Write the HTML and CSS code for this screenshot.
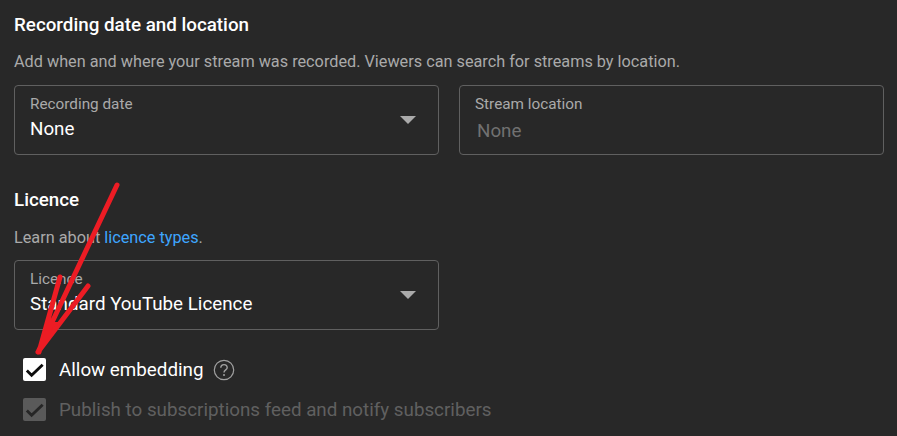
FILE: index.html
```html
<!DOCTYPE html>
<html lang="en">

<head>
    <meta charset="UTF-8">
    <title>Recording date and licence</title>
    <link rel="stylesheet" href="styles.css">
</head>

<body>
    <div class="page">
        <h2 class="section-title">Recording date and location</h2>
        <p class="section-desc">Add when and where your stream was recorded. Viewers can search for streams by location.</p>
        <div class="field-row">
            <div class="field">
                <div class="field-label">Recording date</div>
                <div class="field-value">None</div>
                <span class="caret"></span>
            </div>
            <div class="field">
                <div class="field-label">Stream location</div>
                <div class="field-value field-empty">None</div>
            </div>
        </div>

        <h2 class="section-title licence-title">Licence</h2>
        <p class="section-desc licence-desc">Learn about <a class="link" href="#">licence types</a>.</p>
        <div class="field-row licence-row">
            <div class="field">
                <div class="field-label">Licence</div>
                <div class="field-value">Standard YouTube Licence</div>
                <span class="caret"></span>
            </div>
        </div>

        <div class="check-row first-check">
            <span class="checkbox">
                <svg viewBox="0 0 24 24" width="24" height="24"><path d="M4 12.5l5 5L20.5 6.5" fill="none" stroke="#0d0d0d" stroke-width="3"/></svg>
            </span>
            <span class="check-label">Allow embedding</span>
            <svg class="help" viewBox="0 0 22 22" width="22" height="22">
                <circle cx="11" cy="11" r="9.7" fill="none" stroke="#a0a0a0" stroke-width="1.2"/>
                <path d="M7.8 8.8a3.2 3.2 0 0 1 6.4 0c0 2-3.2 2.2-3.2 4.6" fill="none" stroke="#a0a0a0" stroke-width="1.4"/>
                <circle cx="11" cy="16" r="1" fill="#a0a0a0"/>
            </svg>
        </div>
        <div class="check-row disabled-check">
            <span class="checkbox">
                <svg viewBox="0 0 24 24" width="24" height="24"><path d="M4 12.5l5 5L20.5 6.5" fill="none" stroke="#262626" stroke-width="3"/></svg>
            </span>
            <span class="check-label">Publish to subscriptions feed and notify subscribers</span>
        </div>
    </div>

    <!-- red arrow drawn on top of the screenshot -->
    <svg class="annotation" width="897" height="436" viewBox="0 0 897 436">
        <path d="M38 352L47 322L60 322Z" fill="#ed1c24"/>
        <path d="M117 185L38 352M60 277L39 352M88 286L38 352" fill="none" stroke="#ed1c24" stroke-width="5" stroke-linecap="round"/>
    </svg>
</body>

</html>
```

FILE: styles.css
```css
html, body {
    margin: 0;
    height: 100%;
    overflow: hidden;
}

body {
    background: #282828;
    font-family: Roboto, "Liberation Sans", sans-serif;
    color: #fff;
}

.page {
    padding: 14px 13px 0 14px;
}

.section-title {
    margin: 0;
    font-size: 18.8px;
    line-height: 22px;
    font-weight: 500;
}

.licence-title {
    margin-top: 34px;
}

.section-desc {
    margin: 16px 0 0;
    font-size: 16.25px;
    line-height: 20px;
    color: #aaa;
}

.licence-desc {
    margin-top: 17px;
}

.link {
    color: #3ea6ff;
    text-decoration: none;
}

.field-row {
    display: flex;
    gap: 20px;
    margin-top: 13px;
}

.licence-row {
    margin-top: 12px;
}

.field {
    position: relative;
    box-sizing: border-box;
    width: 425px;
    height: 70px;
    padding: 10px 15px;
    border: 1px solid #606060;
    border-radius: 4px;
}

.field-label {
    font-size: 15.3px;
    line-height: 16px;
    color: #aaa;
}

.field-value {
    margin-top: 5px;
    font-size: 18.8px;
    line-height: 24px;
}

.field-empty {
    margin-top: 7px;
    padding-left: 2px;
    color: #717171;
}

.caret {
    position: absolute;
    top: 30px;
    right: 22px;
    border-left: 8px solid transparent;
    border-right: 8px solid transparent;
    border-top: 8px solid #aaa;
}

.check-row {
    display: flex;
    align-items: center;
    margin-left: 9px;
    height: 23px;
}

.first-check {
    margin-top: 28px;
}

.disabled-check {
    margin-top: 17px;
}

.checkbox {
    display: flex;
    align-items: center;
    justify-content: center;
    width: 23px;
    height: 23px;
    border-radius: 2px;
    background: #fff;
}

.check-label {
    margin-left: 13px;
    font-size: 18.8px;
    line-height: 24px;
}

.help {
    margin-left: 10px;
}

.disabled-check .checkbox {
    background: #5a5a5a;
}

.disabled-check .check-label {
    color: #606060;
}

.annotation {
    position: absolute;
    top: 0;
    left: 0;
}
```
